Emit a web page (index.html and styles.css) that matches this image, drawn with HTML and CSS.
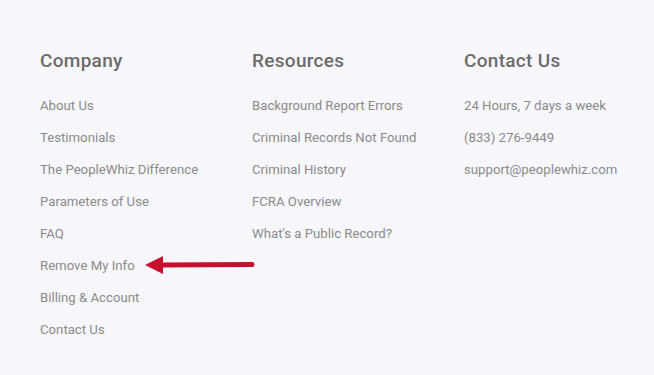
FILE: index.html
```html
<!DOCTYPE html>
<html lang="en">
<head>
  <meta charset="UTF-8" />
  <title>PeopleWhiz Footer</title>
  <link rel="stylesheet" href="styles.css">
</head>
<body>
  <footer class="footer">
    <div class="footer-col">
      <h3>Company</h3>
      <ul>
        <li><a href="#">About Us</a></li>
        <li><a href="#">Testimonials</a></li>
        <li><a href="#">The PeopleWhiz Difference</a></li>
        <li><a href="#">Parameters of Use</a></li>
        <li><a href="#">FAQ</a></li>
        <li class="marked">
          <a href="#">Remove My Info</a>
          <svg class="arrow" width="112" height="20" viewBox="0 0 112 20">
            <path d="M0 10 L18 1 L18 19 Z" fill="#c8102e"/>
            <line x1="15" y1="10" x2="107" y2="9.5" stroke="#c8102e" stroke-width="5" stroke-linecap="round"/>
          </svg>
        </li>
        <li><a href="#">Billing &amp; Account</a></li>
        <li><a href="#">Contact Us</a></li>
      </ul>
    </div>

    <div class="footer-col">
      <h3>Resources</h3>
      <ul>
        <li><a href="#">Background Report Errors</a></li>
        <li><a href="#">Criminal Records Not Found</a></li>
        <li><a href="#">Criminal History</a></li>
        <li><a href="#">FCRA Overview</a></li>
        <li><a href="#">What's a Public Record?</a></li>
      </ul>
    </div>

    <div class="footer-col">
      <h3>Contact Us</h3>
      <ul>
        <li>24 Hours, 7 days a week</li>
        <li>(833) 276-9449</li>
        <li><a href="#">support@peoplewhiz.com</a></li>
      </ul>
    </div>
  </footer>
</body>
</html>
```

FILE: styles.css
```css
* {
  box-sizing: border-box;
}

body {
  margin: 0;
  background-color: #f7f7fb;
  font-family: 'Roboto', 'Liberation Sans', sans-serif;
  color: #8a8a8a;
}

.footer {
  display: grid;
  grid-template-columns: 212px 212px 1fr;
  padding: 50px 40px 0;
}

.footer-col h3 {
  margin: 0 0 18px;
  font-size: 19px;
  line-height: 22px;
  letter-spacing: 0.3px;
  font-weight: 500;
  color: #6b6b6b;
}

.footer-col ul {
  list-style: none;
  margin: 0;
  padding: 0;
}

.footer-col li {
  font-size: 13.2px;
  line-height: 32px;
}

.footer-col a {
  color: #8a8a8a;
  text-decoration: none;
}

.marked {
  position: relative;
}

.arrow {
  position: absolute;
  left: 105px;
  top: 5px;
}
```
